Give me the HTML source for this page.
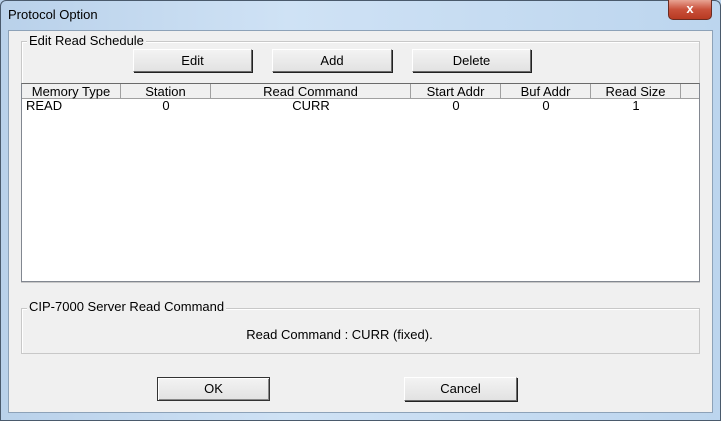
<!DOCTYPE html><html><head><style>
*{margin:0;padding:0;box-sizing:border-box}
body{width:721px;height:421px;overflow:hidden;font-family:"Liberation Sans",sans-serif;font-size:13px;color:#000;position:relative;background:linear-gradient(90deg,#b9d1ea,#cfe2f5 40%,#bcd5ee);}
.a{position:absolute}
.win{position:absolute;left:0;top:0;width:721px;height:421px;border:1px solid #4a5a6c;border-radius:6px 6px 0 0;}
.client{left:8px;top:30px;width:705px;height:383px;background:#f0f0f0;border:1px solid #8da2b8}
.btn{position:absolute;background:linear-gradient(#f3f3f3,#e2e2e2);border:1px solid #fff;border-right-color:#6a6a6a;border-bottom-color:#6a6a6a;box-shadow:1px 1px 0 #222;text-align:center;line-height:21px}
.grp{position:absolute;border:1px solid #c8c8c8;box-shadow:inset 1px 1px 0 #fff}
.lbl{position:absolute;background:#f0f0f0;padding:0 2px}
.hd{position:absolute;top:0;height:15px;border-right:1px solid #a0a0a0;border-bottom:1px solid #a0a0a0;text-align:center;line-height:15px;background:#f0f0f0}
.c{position:absolute;top:15px;text-align:center;line-height:14px}
</style></head><body>
<div class="win"></div>
<div class="a" style="left:8px;top:7px;font-size:13px">Protocol Option</div>
<div class="a" style="left:668px;top:0;width:44px;height:20px;border:1px solid #6b2b20;border-top:none;border-radius:0 0 5px 5px;background:linear-gradient(#e8a494,#c9503a 50%,#b83a22);color:#fff;font-weight:bold;text-align:center;line-height:18px;font-size:13px">x</div>
<div class="a client"></div>
<div class="grp" style="left:21px;top:41px;width:679px;height:242px"></div>
<div class="lbl" style="left:27px;top:33px">Edit Read Schedule</div>
<div class="btn" style="left:133px;top:49px;width:119px;height:23px">Edit</div>
<div class="btn" style="left:272px;top:49px;width:120px;height:23px">Add</div>
<div class="btn" style="left:412px;top:49px;width:119px;height:23px">Delete</div>
<div class="a" style="left:21px;top:83px;width:679px;height:199px;background:#fff;border:1px solid #828790;border-top-color:#6a6a6a">
<div class="hd" style="left:0;width:99px">Memory Type</div>
<div class="hd" style="left:99px;width:90px">Station</div>
<div class="hd" style="left:189px;width:200px">Read Command</div>
<div class="hd" style="left:389px;width:90px">Start Addr</div>
<div class="hd" style="left:479px;width:90px">Buf Addr</div>
<div class="hd" style="left:569px;width:90px">Read Size</div>
<div class="hd" style="left:659px;width:18px;border-right:none"></div>
<div class="c" style="left:4px">READ</div>
<div class="c" style="left:99px;width:90px">0</div>
<div class="c" style="left:189px;width:200px">CURR</div>
<div class="c" style="left:389px;width:90px">0</div>
<div class="c" style="left:479px;width:90px">0</div>
<div class="c" style="left:569px;width:90px">1</div>
</div>
<div class="grp" style="left:21px;top:308px;width:679px;height:46px"></div>
<div class="lbl" style="left:27px;top:299px">CIP-7000 Server Read Command</div>
<div class="a" style="left:0px;top:327px;width:679px;text-align:center">Read Command : CURR (fixed).</div>
<div class="btn" style="left:157px;top:377px;width:113px;height:24px;border:1px solid #333;box-shadow:inset 1px 1px 0 #fff,inset -1px -1px 0 #888">OK</div>
<div class="btn" style="left:404px;top:377px;width:113px;height:24px">Cancel</div>
</body></html>
